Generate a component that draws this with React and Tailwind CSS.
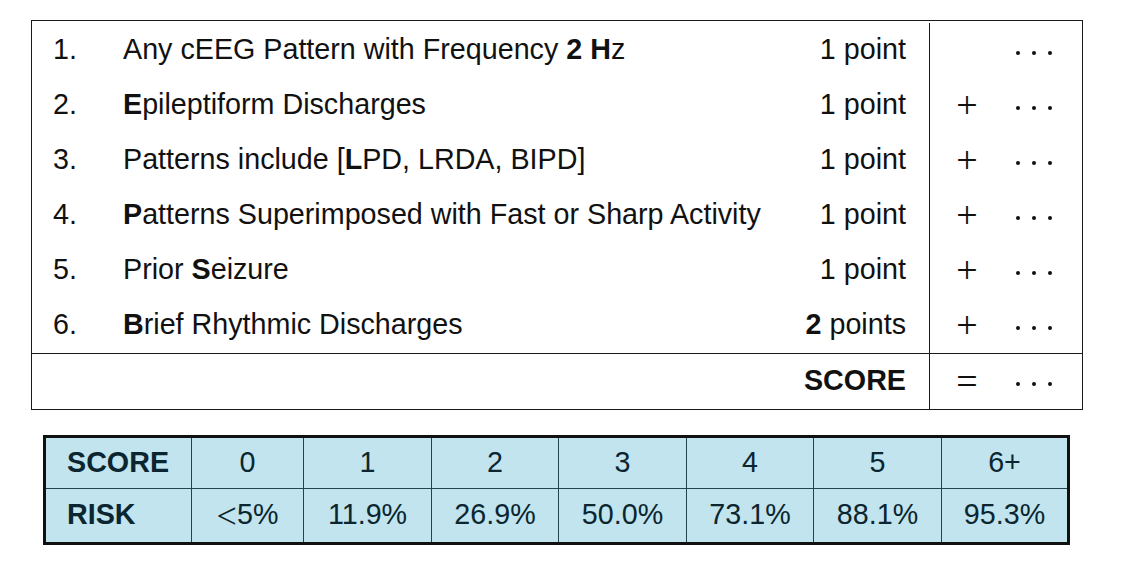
import React from 'react';

const ROWS = [
  { n: '1.', label: <>Any cEEG Pattern with Frequency <b>2 H</b>z</>, pts: <>1 point</>, op: '' },
  { n: '2.', label: <><b>E</b>pileptiform Discharges</>, pts: <>1 point</>, op: '+' },
  { n: '3.', label: <>Patterns include [<b>L</b>PD, LRDA, BIPD]</>, pts: <>1 point</>, op: '+' },
  { n: '4.', label: <><b>P</b>atterns Superimposed with Fast or Sharp Activity</>, pts: <>1 point</>, op: '+' },
  { n: '5.', label: <>Prior <b>S</b>eizure</>, pts: <>1 point</>, op: '+' },
  { n: '6.', label: <><b>B</b>rief Rhythmic Discharges</>, pts: <><b>2</b> points</>, op: '+' },
];

const RISK = [
  { s: '0', r: <><span className="font-['Liberation_Serif',serif] text-[36px] font-light leading-none align-middle">&lt;</span>5%</>, w: 'w-[112px]' },
  { s: '1', r: '11.9%', w: 'w-[128px]' },
  { s: '2', r: '26.9%', w: 'w-[127px]' },
  { s: '3', r: '50.0%', w: 'w-[128px]' },
  { s: '4', r: '73.1%', w: 'w-[127px]' },
  { s: '5', r: '88.1%', w: 'w-[128px]' },
  { s: '6+', r: '95.3%', w: 'flex-1' },
];

function Dots() {
  return (
    <div className="flex items-center gap-[12px] pt-[5px] ml-[14px]">
      <span className="w-[4px] h-[4px] rounded-full bg-[#111]" />
      <span className="w-[4px] h-[4px] rounded-full bg-[#111]" />
      <span className="w-[4px] h-[4px] rounded-full bg-[#111]" />
    </div>
  );
}

function OpCell({ op }) {
  return (
    <div className="flex items-center h-full">
      <span className="w-[72px] text-center font-['Liberation_Serif',serif] text-[38px] font-light leading-none pl-[2px]">
        {op}
      </span>
      <Dots />
    </div>
  );
}

export default function App() {
  return (
    <div className="w-[1127px] h-[564px] bg-white pt-[20px] pl-[31px] font-['Liberation_Sans',Arial,sans-serif] text-[#111]">
      {/* Score sheet */}
      <div className="w-[1052px] border-[1.5px] border-[#1a1a1a] text-[28.7px]">
        <div className="pt-[1.5px]">
          {ROWS.map((row, i) => (
            <div key={i} className="grid grid-cols-[898px_1fr] h-[55px]">
              <div className="flex items-center border-r-[1.5px] border-[#1a1a1a] pl-[21px] pr-[23px]">
                <span className="w-[70px]">{row.n}</span>
                <span className="flex-1">{row.label}</span>
                <span>{row.pts}</span>
              </div>
              <OpCell op={row.op} />
            </div>
          ))}
        </div>
        <div className="grid grid-cols-[898px_1fr] h-[56px] border-t-[1.5px] border-[#1a1a1a]">
          <div className="flex items-center justify-end border-r-[1.5px] border-[#1a1a1a] pr-[23px]">
            <b>SCORE</b>
          </div>
          <OpCell op="=" />
        </div>
      </div>

      {/* Risk table */}
      <div className="ml-[12px] mt-[25px] w-[1027px] border-[3px] border-[#111] bg-[#c1e4ef] text-[#0b2630] text-[28.7px]">
        <div className="flex h-[51px] border-b border-[#24434c]">
          <div className="w-[146px] flex items-center pl-[21px] font-bold border-r border-[#24434c]">SCORE</div>
          {RISK.map((c, i) => (
            <div key={i} className={`${c.w} flex items-center justify-center ${i < RISK.length - 1 ? 'border-r border-[#24434c]' : ''}`}>
              {c.s}
            </div>
          ))}
        </div>
        <div className="flex h-[53px]">
          <div className="w-[146px] flex items-center pl-[21px] font-bold border-r border-[#24434c]">RISK</div>
          {RISK.map((c, i) => (
            <div key={i} className={`${c.w} flex items-center justify-center ${i < RISK.length - 1 ? 'border-r border-[#24434c]' : ''}`}>
              <span>{c.r}</span>
            </div>
          ))}
        </div>
      </div>
    </div>
  );
}
